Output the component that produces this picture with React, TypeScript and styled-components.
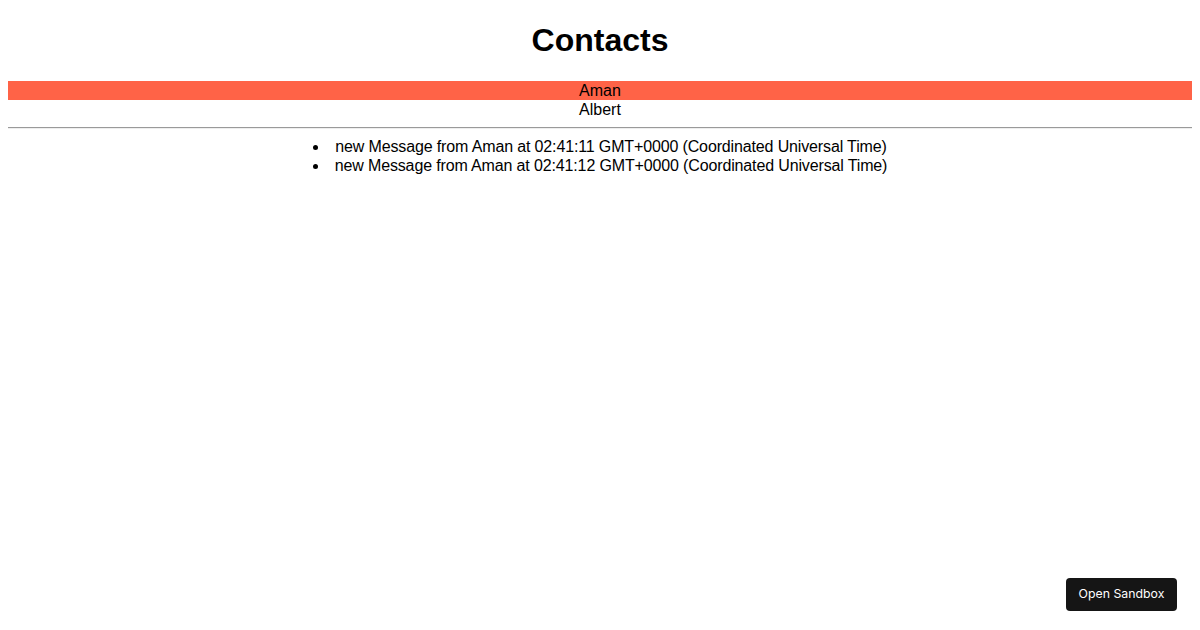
import React, { useState } from "react";
import styled, { createGlobalStyle } from "styled-components";

const GlobalStyle = createGlobalStyle`
    body {
        margin: 8px;
        font-family: "Liberation Sans", Arial, sans-serif;
        background: #fff;
        color: #000;
    }
`;

const Page = styled.div`
    text-align: center;
`;

const Title = styled.h1`
    font-size: 32px;
    font-weight: bold;
    margin: 14px 0 22px;
    line-height: 37px;
`;

const ContactList = styled.div`
    display: flex;
    flex-direction: column;
`;

const ContactRow = styled.div<{ $active: boolean }>`
    height: 19px;
    line-height: 19px;
    font-size: 16px;
    background-color: ${(p) => (p.$active ? "#ff6347" : "transparent")};
    cursor: pointer;
`;

const Divider = styled.hr`
    margin: 8px 0 0;
    border: 0;
    border-top: 1px solid #9a9a9a;
    border-bottom: 1px solid #eee;
`;

const Messages = styled.ul`
    margin: 8px 0 0;
    padding: 0;
    list-style-position: inside;
    font-size: 16px;
    letter-spacing: -0.14px;
`;

const MessageItem = styled.li`
    line-height: 19px;
`;

const SandboxButton = styled.button`
    position: fixed;
    right: 23px;
    bottom: 19px;
    width: 111px;
    height: 33px;
    padding: 0 0 2px;
    border: 0;
    border-radius: 4px;
    background-color: #151515;
    color: #fff;
    font-family: Inter, "Liberation Sans", sans-serif;
    font-size: 12.3px;
    cursor: pointer;
`;

const contacts = ["Aman", "Albert"];

const messages = [
    "new Message from Aman at 02:41:11 GMT+0000 (Coordinated Universal Time)",
    "new Message from Aman at 02:41:12 GMT+0000 (Coordinated Universal Time)",
];

const App = (): JSX.Element => {
    const [selected, setSelected] = useState<string>("Aman");

    return (
        <Page>
            <GlobalStyle />
            <Title>Contacts</Title>
            <ContactList>
                {contacts.map((name) => (
                    <ContactRow key={name} $active={name === selected} onClick={() => setSelected(name)}>
                        {name}
                    </ContactRow>
                ))}
            </ContactList>
            <Divider />
            <Messages>
                {messages.map((m, i) => (
                    <MessageItem key={i}>{m}</MessageItem>
                ))}
            </Messages>
            <SandboxButton>Open Sandbox</SandboxButton>
        </Page>
    );
};

export default App;
